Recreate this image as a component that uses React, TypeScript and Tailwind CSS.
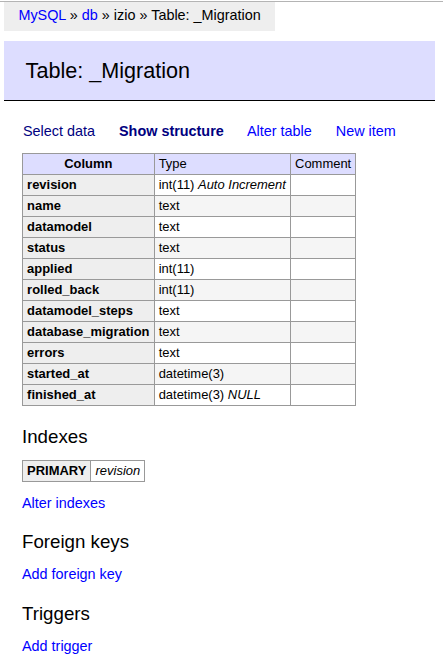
import React from 'react';

type Field = { name: string; type: string; extra?: string };

const fields: Field[] = [
  { name: 'revision', type: 'int(11)', extra: 'Auto Increment' },
  { name: 'name', type: 'text' },
  { name: 'datamodel', type: 'text' },
  { name: 'status', type: 'text' },
  { name: 'applied', type: 'int(11)' },
  { name: 'rolled_back', type: 'int(11)' },
  { name: 'datamodel_steps', type: 'text' },
  { name: 'database_migration', type: 'text' },
  { name: 'errors', type: 'text' },
  { name: 'started_at', type: 'datetime(3)' },
  { name: 'finished_at', type: 'datetime(3)', extra: 'NULL' },
];

const cell = 'border border-[#999] px-[4.1px] py-[2px] leading-[16px] text-left align-top';

const App: React.FC = () => {
  return (
    <div
      className="mt-px min-h-[659px] border-t border-[#b4b4b4] bg-white text-[14.4px] leading-[1.25] text-black"
      style={{ fontFamily: '"Liberation Sans", Arial, sans-serif' }}
    >
      <div className="ml-[4px] inline-block h-[29px] whitespace-nowrap bg-[#eee] px-[14.4px] leading-[26px]">
        <a href="#" className="text-[#00f]">MySQL</a> » <a href="#" className="text-[#00f]">db</a> » izio » Table: _Migration
      </div>

      <div className="pl-[22px] pr-[8px] pt-[10px]">
        <h2 className="-ml-[18px] mb-[21px] border-b border-black bg-[#ddf] px-[21.6px] py-4 text-[21.6px] leading-[27px] font-normal">
          Table: _Migration
        </h2>

        <p className="m-0 pl-px">
          <a href="#" className="mr-[20px] text-[#000080]">Select data</a>{' '}
          <a href="#" className="mr-[20px] font-bold text-[#000080]">Show structure</a>{' '}
          <a href="#" className="mr-[20px] text-[#00f]">Alter table</a>{' '}
          <a href="#" className="mr-[20px] text-[#00f]">New item</a>
        </p>

        <table className="mt-[13px] border-collapse text-[12.96px]">
          <thead>
            <tr className="bg-[#ddf]">
              <th className={`${cell} text-center! font-bold`}>Column</th>
              <td className={cell}>Type</td>
              <td className={cell}>Comment</td>
            </tr>
          </thead>
          <tbody>
            {fields.map((f, i) => (
              <tr key={f.name} className={i % 2 === 1 ? 'bg-[#f5f5f5]' : 'bg-white'}>
                <th className={`${cell} bg-[#eee] font-bold`}>{f.name}</th>
                <td className={cell}>
                  {f.type}
                  {f.extra && (
                    <>
                      {' '}
                      <i>{f.extra}</i>
                    </>
                  )}
                </td>
                <td className={cell}></td>
              </tr>
            ))}
          </tbody>
        </table>

        <h3 className="mt-[18.72px] text-[18.72px] leading-[23.4px] font-normal">Indexes</h3>
        <table className="mt-[12px] border-collapse text-[12.96px]">
          <tbody>
            <tr>
              <th className={`${cell} bg-[#eee] font-bold`}>PRIMARY</th>
              <td className={cell}>
                <i>revision</i>
              </td>
            </tr>
          </tbody>
        </table>
        <p className="mt-[11.52px]">
          <a href="#" className="text-[#00f]">Alter indexes</a>
        </p>

        <h3 className="mt-[18.72px] text-[18.72px] leading-[23.4px] font-normal">Foreign keys</h3>
        <p className="mt-[11.52px]">
          <a href="#" className="text-[#00f]">Add foreign key</a>
        </p>

        <h3 className="mt-[18.72px] text-[18.72px] leading-[23.4px] font-normal">Triggers</h3>
        <p className="mt-[11.52px]">
          <a href="#" className="text-[#00f]">Add trigger</a>
        </p>
      </div>
    </div>
  );
};

export default App;
